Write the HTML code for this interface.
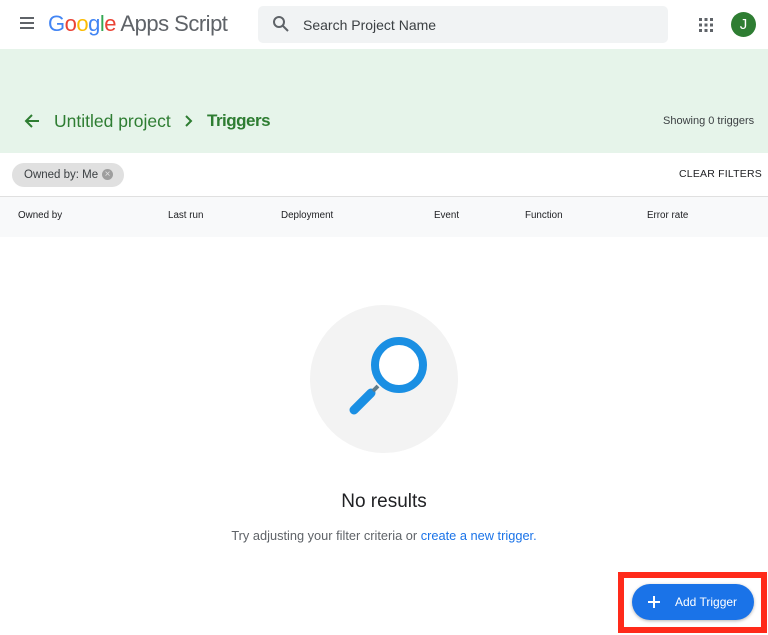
<!DOCTYPE html>
<html><head><style>
body{margin:0;width:768px;height:635px;position:relative;background:#fff;font-family:"Liberation Sans",Arial,sans-serif;overflow:hidden}
.a{position:absolute}
</style></head><body>
<div class="a" style="left:20px;top:17px;width:14px;height:2px;background:#5f6368;box-shadow:0 5px 0 #5f6368,0 10px 0 #5f6368"></div>
<div class="a" style="left:48px;top:11px;font-size:22px;letter-spacing:-0.5px"><span style="color:#4285f4">G</span><span style="color:#ea4335">o</span><span style="color:#fbbc05">o</span><span style="color:#4285f4">g</span><span style="color:#34a853">l</span><span style="color:#ea4335">e</span> <span style="color:#5f6368">Apps Script</span></div>
<div class="a" style="left:258px;top:6px;width:410px;height:37px;background:#f1f3f4;border-radius:5px"></div>
<svg class="a" style="left:272px;top:15px" width="18" height="18" viewBox="0 0 18 18"><circle cx="7" cy="7" r="5" fill="none" stroke="#5f6368" stroke-width="2"/><path d="M11 11l5 5" stroke="#5f6368" stroke-width="2"/></svg>
<div class="a" style="left:303px;top:17px;font-size:14px;color:#3c4043">Search Project Name</div>
<svg class="a" style="left:698px;top:17px" width="16" height="16"><g fill="#5f6368"><rect x="1" y="1" width="3" height="3"/><rect x="6.5" y="1" width="3" height="3"/><rect x="12" y="1" width="3" height="3"/><rect x="1" y="6.5" width="3" height="3"/><rect x="6.5" y="6.5" width="3" height="3"/><rect x="12" y="6.5" width="3" height="3"/><rect x="1" y="12" width="3" height="3"/><rect x="6.5" y="12" width="3" height="3"/><rect x="12" y="12" width="3" height="3"/></g></svg>
<div class="a" style="left:731px;top:12px;width:25px;height:25px;border-radius:50%;background:#2e7d32;color:#fff;font-size:15px;text-align:center;line-height:25px">J</div>
<div class="a" style="left:0;top:49px;width:768px;height:104px;background:#e6f4ea"></div>
<svg class="a" style="left:24px;top:113px" width="16" height="16"><path d="M15 8H2M8 2L2 8l6 6" fill="none" stroke="#2e7d32" stroke-width="2"/></svg>
<div class="a" style="left:54px;top:111px;font-size:17.5px;color:#2e7d32">Untitled project</div>
<svg class="a" style="left:184px;top:114px" width="10" height="14"><path d="M2 2l5 5-5 5" fill="none" stroke="#2e7d32" stroke-width="2"/></svg>
<div class="a" style="left:207px;top:111px;font-size:17px;color:#2e7d32;font-weight:bold;letter-spacing:-0.5px">Triggers</div>
<div class="a" style="left:663px;top:115px;font-size:11px;color:#3c4043">Showing 0 triggers</div>
<div class="a" style="left:12px;top:163px;width:112px;height:24px;border-radius:12px;background:#e0e0e0"></div>
<div class="a" style="left:24px;top:169px;font-size:11.5px;line-height:13px;color:#3c4043">Owned by: Me</div>
<div class="a" style="left:102px;top:169px;width:11px;height:11px;border-radius:50%;background:#9e9e9e;color:#e0e0e0;font-size:10px;line-height:11px;text-align:center">×</div>
<div class="a" style="left:679px;top:168px;font-size:10.5px;color:#202124;letter-spacing:.2px">CLEAR FILTERS</div>
<div class="a" style="left:0;top:196px;width:768px;height:40px;background:#f8f9fa;border-top:1px solid #e0e0e0"></div>
<div class="a" style="top:210px;font-size:9.8px;color:#202124;left:0;width:768px">
<span class="a" style="left:18px">Owned by</span><span class="a" style="left:168px">Last run</span><span class="a" style="left:281px">Deployment</span><span class="a" style="left:434px">Event</span><span class="a" style="left:525px">Function</span><span class="a" style="left:647px">Error rate</span></div>
<div class="a" style="left:310px;top:305px;width:148px;height:148px;border-radius:50%;background:#f3f3f3"></div>
<svg class="a" style="left:340px;top:330px" width="100" height="100"><path d="M14 80L31 63" stroke="#1a8fe3" stroke-width="9" stroke-linecap="round"/><path d="M33 61l5-5" stroke="#607d8b" stroke-width="4"/><circle cx="59" cy="35" r="24" fill="#fff" stroke="#1a8fe3" stroke-width="8"/></svg>
<div class="a" style="left:0;width:768px;top:491px;text-align:center;font-size:19px;color:#202124">No results</div>
<div class="a" style="left:0;width:768px;top:528px;text-align:center;font-size:12.8px;color:#5f6368">Try adjusting your filter criteria or <span style="color:#1a73e8">create a new trigger.</span></div>
<div class="a" style="left:618px;top:572px;width:137px;height:49px;border:6px solid #ff2a1a"></div>
<div class="a" style="left:632px;top:584px;width:122px;height:36px;border-radius:18px;background:#1a73e8;box-shadow:0 1px 3px rgba(0,0,0,.3)"></div>
<svg class="a" style="left:647px;top:595px" width="14" height="14"><path d="M7 1v12M1 7h12" stroke="#fff" stroke-width="2"/></svg>
<div class="a" style="left:675px;top:595px;font-size:12px;color:#fff">Add Trigger</div>
</body></html>
